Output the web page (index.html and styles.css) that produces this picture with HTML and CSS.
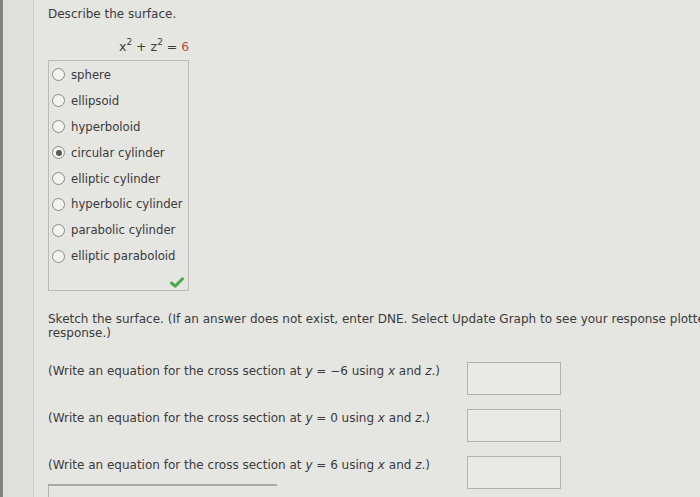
FILE: index.html
```html
<!DOCTYPE html>
<html>
<head>
<meta charset="utf-8">
<link rel="stylesheet" href="styles.css">
</head>
<body>
<div class="page">
  <div class="edge"></div>
  <div class="gutter"></div>
  <div class="content">
    <div class="prompt">Describe the surface.</div>
    <div class="equation">x<sup>2</sup> + z<sup>2</sup> = <span class="red">6</span></div>
    <div class="options">
      <div class="opt"><span class="radio"></span>sphere</div>
      <div class="opt"><span class="radio"></span>ellipsoid</div>
      <div class="opt"><span class="radio"></span>hyperboloid</div>
      <div class="opt"><span class="radio checked"></span>circular cylinder</div>
      <div class="opt"><span class="radio"></span>elliptic cylinder</div>
      <div class="opt"><span class="radio"></span>hyperbolic cylinder</div>
      <div class="opt"><span class="radio"></span>parabolic cylinder</div>
      <div class="opt"><span class="radio"></span>elliptic paraboloid</div>
      <div class="check">
        <svg width="14" height="11" viewBox="0 0 14 11"><path d="M1.5 6 L5.2 9.2 L12.5 1.8" fill="none" stroke="#4aa84a" stroke-width="3" stroke-linecap="round" stroke-linejoin="round"/></svg>
      </div>
    </div>
    <div class="sketch">
      <div class="line">Sketch the surface. (If an answer does not exist, enter DNE. Select Update Graph to see your response plotted on the screen.</div>
      <div class="line">response.)</div>
    </div>
    <div class="row first">
      <div class="q">(Write an equation for the cross section at <i>y</i> = −6 using <i>x</i> and <i>z</i>.)</div>
      <div class="box"></div>
    </div>
    <div class="row">
      <div class="q">(Write an equation for the cross section at <i>y</i> = 0 using <i>x</i> and <i>z</i>.)</div>
      <div class="box"></div>
    </div>
    <div class="row">
      <div class="q">(Write an equation for the cross section at <i>y</i> = 6 using <i>x</i> and <i>z</i>.)</div>
      <div class="box"></div>
    </div>
    <div class="graphbox"></div>
  </div>
</div>
</body>
</html>
```

FILE: styles.css
```css
html, body {
  margin: 0;
  padding: 0;
  width: 700px;
  height: 497px;
  overflow: hidden;
  background: #e5e5e2;
}
.page {
  display: flex;
  height: 497px;
  font-family: "DejaVu Sans", Verdana, sans-serif;
  font-size: 12px;
  color: #3b3b3b;
}
.edge {
  width: 3px;
  background: #858580;
  flex: none;
}
.gutter {
  width: 30px;
  flex: none;
  background: #dfdfdb;
  border-right: 1px solid #cfcfcb;
}
.content {
  flex: 1;
  padding-left: 14px;
  padding-top: 5px;
  min-width: 0;
  overflow: hidden;
}
.prompt {
  font-size: 12px;
  line-height: 18px;
}
.equation {
  margin-top: 17px;
  margin-left: 71px;
  font-size: 12.5px;
  line-height: 14px;
}
.equation sup {
  font-size: 9px;
  vertical-align: 6px;
  line-height: 0;
}
.red { color: #c94a3f; }
.options {
  margin-top: 6px;
  width: 141px;
  height: 231px;
  border: 1px solid #b9b9b5;
  box-sizing: border-box;
  padding-top: 1px;
  padding-left: 3px;
}
.opt {
  display: flex;
  align-items: center;
  height: 25.9px;
  white-space: nowrap;
  font-size: 11.7px;
}
.radio {
  width: 11px;
  height: 11px;
  border: 1px solid #8a8a88;
  border-radius: 50%;
  background: #f2f2f0;
  margin-right: 6px;
  flex: none;
  display: flex;
  align-items: center;
  justify-content: center;
}
.radio.checked::after {
  content: "";
  width: 6px;
  height: 6px;
  border-radius: 50%;
  background: #5a5a5a;
}
.check {
  display: flex;
  justify-content: flex-end;
  padding-right: 4px;
  margin-top: 8px;
}
.sketch {
  margin-top: 21px;
  font-size: 12px;
  line-height: 14px;
  white-space: nowrap;
}
.row {
  display: flex;
  align-items: flex-start;
  margin-top: 14px;
}
.row.first { margin-top: 22px; }
.q {
  width: 419px;
  white-space: nowrap;
  font-size: 12px;
  line-height: 14px;
  padding-top: 2px;
}
.box {
  width: 94px;
  height: 33px;
  border: 1px solid #b2b2ae;
  box-sizing: border-box;
  background: #e9e9e6;
}
.graphbox {
  margin-top: -5px;
  width: 228px;
  height: 20px;
  border-top: 2px solid #a9a9a5;
  border-left: 1px solid #b2b2ae;
}
```
